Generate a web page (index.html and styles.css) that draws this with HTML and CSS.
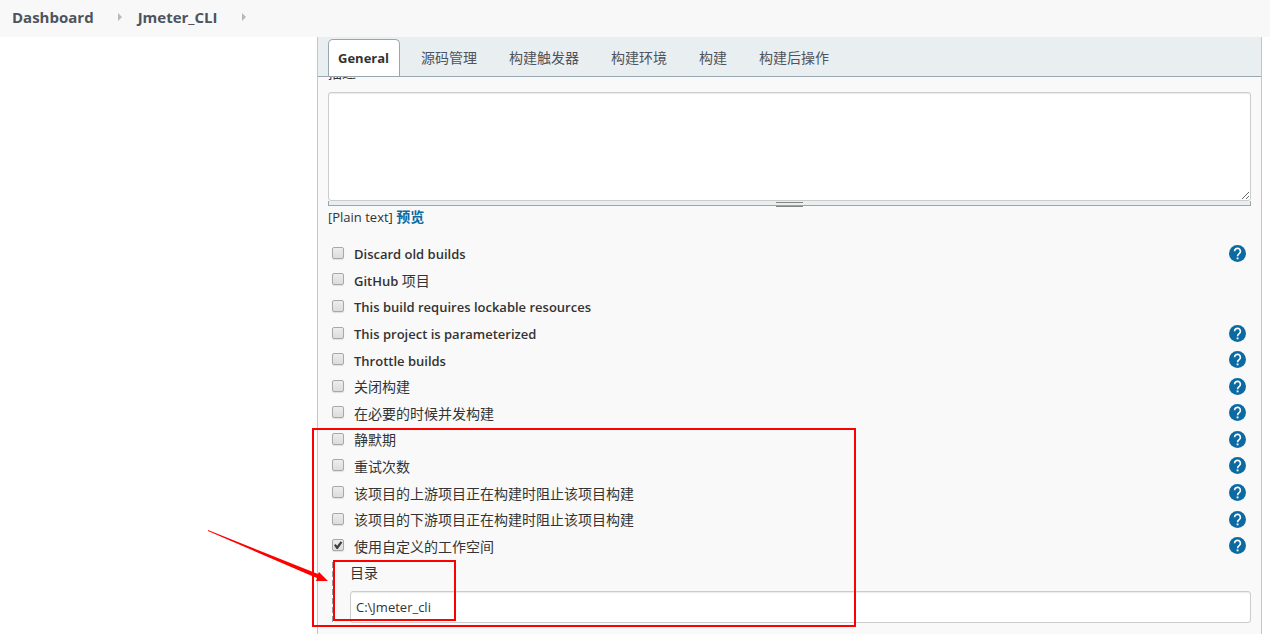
FILE: index.html
```html
<!DOCTYPE html>
<html lang="zh-CN">

<head>
    <meta charset="UTF-8">
    <meta name="viewport" content="width=device-width, initial-scale=1.0">
    <title>Jmeter_CLI Config [Jenkins]</title>
    <link rel="stylesheet" href="styles.css">
</head>

<body>
    <!-- Help icon, shared by every row -->
    <svg class="sprite" aria-hidden="true">
        <symbol id="help" viewBox="0 0 24 24">
            <circle cx="12" cy="12" r="12" fill="#0b6aa2" />
            <path d="M7.9 8.8a4.1 4.1 0 1 1 6.8 3.1c-1.6 1.3-2.6 1.9-2.6 4" fill="none" stroke="#fff" stroke-width="2.3" />
            <rect x="10.8" y="17.6" width="2.6" height="2.6" fill="#fff" />
        </symbol>
    </svg>

    <nav class="breadcrumbs">
        <a href="#">Dashboard</a>
        <span class="crumb-arrow"></span>
        <a href="#">Jmeter_CLI</a>
        <span class="crumb-arrow"></span>
    </nav>

    <div class="page">
        <div class="side-panel"></div>
        <main class="config">
            <div class="tab-bar">
                <button type="button" class="tab active">General</button>
                <button type="button" class="tab">源码管理</button>
                <button type="button" class="tab">构建触发器</button>
                <button type="button" class="tab">构建环境</button>
                <button type="button" class="tab">构建</button>
                <button type="button" class="tab">构建后操作</button>
            </div>

            <form class="config-form">
                <label class="desc-label" for="description">描述</label>
                <textarea class="description" id="description"></textarea>
                <div class="resize-handle"></div>
                <div class="preview">[Plain text] <a href="#">预览</a></div>

                <div class="options">
                    <div class="option">
                        <label><input type="checkbox"><span>Discard old builds</span></label>
                        <button type="button" class="help" aria-label="Help"><svg><use href="#help" /></svg></button>
                    </div>
                    <div class="option">
                        <label><input type="checkbox"><span>GitHub <span class="zh-text">项目</span></span></label>
                    </div>
                    <div class="option">
                        <label><input type="checkbox"><span>This build requires lockable resources</span></label>
                    </div>
                    <div class="option">
                        <label><input type="checkbox"><span>This project is parameterized</span></label>
                        <button type="button" class="help" aria-label="Help"><svg><use href="#help" /></svg></button>
                    </div>
                    <div class="option">
                        <label><input type="checkbox"><span>Throttle builds</span></label>
                        <button type="button" class="help" aria-label="Help"><svg><use href="#help" /></svg></button>
                    </div>
                    <div class="option">
                        <label><input type="checkbox"><span class="zh-text">关闭构建</span></label>
                        <button type="button" class="help" aria-label="Help"><svg><use href="#help" /></svg></button>
                    </div>
                    <div class="option">
                        <label><input type="checkbox"><span class="zh-text">在必要的时候并发构建</span></label>
                        <button type="button" class="help" aria-label="Help"><svg><use href="#help" /></svg></button>
                    </div>
                    <div class="option">
                        <label><input type="checkbox"><span class="zh-text">静默期</span></label>
                        <button type="button" class="help" aria-label="Help"><svg><use href="#help" /></svg></button>
                    </div>
                    <div class="option">
                        <label><input type="checkbox"><span class="zh-text">重试次数</span></label>
                        <button type="button" class="help" aria-label="Help"><svg><use href="#help" /></svg></button>
                    </div>
                    <div class="option">
                        <label><input type="checkbox"><span class="zh-text">该项目的上游项目正在构建时阻止该项目构建</span></label>
                        <button type="button" class="help" aria-label="Help"><svg><use href="#help" /></svg></button>
                    </div>
                    <div class="option">
                        <label><input type="checkbox"><span class="zh-text">该项目的下游项目正在构建时阻止该项目构建</span></label>
                        <button type="button" class="help" aria-label="Help"><svg><use href="#help" /></svg></button>
                    </div>
                    <div class="option">
                        <label><input type="checkbox" checked><span class="zh-text">使用自定义的工作空间</span></label>
                        <button type="button" class="help" aria-label="Help"><svg><use href="#help" /></svg></button>
                    </div>
                </div>

                <div class="nested">
                    <label for="directory">目录</label>
                    <input type="text" id="directory" value="C:\Jmeter_cli">
                </div>
            </form>
        </main>
    </div>

    <!-- Red marks over the workspace setting -->
    <svg class="marks" width="860" height="634" viewBox="0 0 860 634" aria-hidden="true">
        <rect x="313" y="429" width="542" height="197" />
        <rect x="334" y="561" width="121" height="59" />
        <path d="M208 530 L318 574 L319 572 L328 581 L316 581 L317 578 L312 576 L208 531 Z" />
    </svg>
</body>

</html>
```

FILE: styles.css
```css
* {
    box-sizing: border-box;
}

body {
    margin: 0;
    min-height: 100vh;
    display: flex;
    flex-direction: column;
    background: #fff;
    color: #333;
    font-family: "Open Sans", "Noto Sans CJK SC", sans-serif;
    font-size: 13px;
    line-height: 20px;
    overflow: hidden;
}

a {
    color: #0b6aa2;
    font-weight: 700;
    text-decoration: none;
}

button,
input,
textarea {
    font: inherit;
    color: inherit;
}

.sprite {
    display: none;
}

/* Breadcrumbs */
.breadcrumbs {
    display: flex;
    align-items: center;
    height: 37px;
    padding: 0 12px 3px;
    background: #f8f8f8;
}

.breadcrumbs a {
    color: #4d545d;
    font-size: 15px;
}

.crumb-arrow {
    margin: 0 16px 0 24px;
    border: 4px solid transparent;
    border-left-color: #b8b8b8;
    border-right: 0;
}

/* Layout */
.page {
    flex: 1;
    display: flex;
    padding-right: 8px;
}

.side-panel {
    flex: 0 0 317px;
}

.config {
    flex: 1;
    min-width: 0;
    background: #f9f9f9;
    border: 1px solid #c5c5c5;
    border-width: 0 1px;
}

/* Tabs */
.tab-bar {
    position: relative;
    z-index: 1;
    display: flex;
    align-items: flex-end;
    gap: 10px;
    height: 40px;
    padding-left: 10px;
    background: #e9eef1;
    border-bottom: 1px solid #98a6af;
}

.tab {
    height: 37px;
    padding: 0 11px;
    border: 0;
    background: none;
    color: #4d545d;
    font-size: 14px;
    cursor: pointer;
}

.tab.active {
    padding: 0 10px 0 9px;
    background: #fff;
    border: 1px solid #98a6af;
    border-bottom: 0;
    border-radius: 5px 5px 0 0;
    color: #333;
    font-size: 13px;
    font-weight: 700;
}

/* Form */
.config-form {
    display: flex;
    flex-direction: column;
    padding: 0 10px;
}

.desc-label {
    margin-top: -14px;
    margin-bottom: 9px;
    font-size: 14px;
}

.description {
    height: 109px;
    border: 1px solid #ccc;
    border-radius: 3px;
    background: #fff;
    box-shadow: inset 0 1px 1px rgba(0, 0, 0, 0.08);
    resize: vertical;
}

.resize-handle {
    display: flex;
    justify-content: center;
    height: 5px;
    background: #e9eef1;
    border: 1px solid #98a6af;
    border-top: 0;
}

.resize-handle::before {
    content: "";
    width: 27px;
    height: 3px;
    margin-top: 1px;
    border: 1px solid #808580;
    border-width: 1px 0;
}

.preview {
    margin-top: 1px;
    margin-bottom: 14px;
}

.preview a {
    font-size: 14px;
}

/* Checkbox rows share the height evenly */
.options {
    display: grid;
    grid-auto-rows: 1fr;
    height: 319px;
}

.option {
    display: flex;
    align-items: center;
    justify-content: space-between;
    padding-right: 5px;
}

.option label {
    display: flex;
    align-items: center;
    font-weight: 600;
}

.zh-text {
    font-size: 14px;
    font-weight: 400;
}

.option input {
    appearance: none;
    width: 12px;
    height: 12px;
    margin: 0 10px 3px 4px;
    border: 1px solid #a8a8a8;
    border-radius: 2px;
    background: linear-gradient(#ededed, #dcdcdc);
    box-shadow: 0 1px 1px rgba(0, 0, 0, 0.1);
}

.option input:checked::before {
    content: "";
    display: block;
    width: 10px;
    height: 10px;
    background: #404040;
    clip-path: polygon(10% 50%, 25% 38%, 42% 56%, 76% 10%, 94% 22%, 48% 88%, 36% 88%);
}

.help {
    display: flex;
    padding: 0;
    border: 0;
    background: none;
    margin-bottom: 2px;
    cursor: pointer;
}

.help svg {
    width: 17px;
    height: 17px;
}

.nested {
    display: flex;
    flex-direction: column;
    gap: 8px;
    margin-top: 2px;
    margin-left: 4px;
    padding-left: 18px;
    background: repeating-linear-gradient(#999 0 6px, transparent 6px 9px) no-repeat left / 1px 100%;
}

.nested label {
    padding-top: 1px;
    font-size: 14px;
}

.nested input {
    height: 32px;
    padding: 0 5px;
    border: 1px solid #ccc;
    border-radius: 3px;
    background: #fff;
    box-shadow: inset 0 1px 1px rgba(0, 0, 0, 0.08);
}

/* Marks */
.marks {
    position: absolute;
    top: 0;
    left: 0;
    z-index: 2;
    pointer-events: none;
}

.marks rect {
    fill: none;
    stroke: #f00;
    stroke-width: 2;
}

.marks path {
    fill: #f00;
}
```
